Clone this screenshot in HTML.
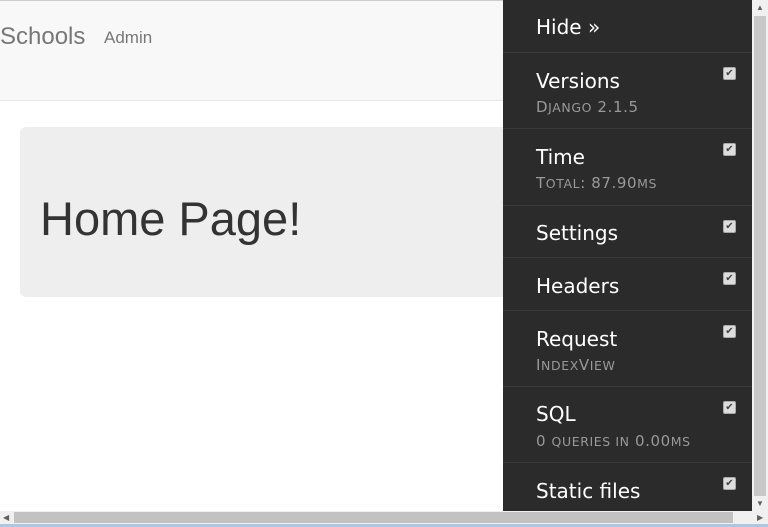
<!DOCTYPE html>
<html><head><style>
*{margin:0;padding:0;box-sizing:border-box}
body{width:768px;height:527px;overflow:hidden;background:#fff;font-family:"Liberation Sans",sans-serif;position:relative}
.top{position:absolute;left:0;top:0;width:768px;height:1px;background:#ccc}
.nav{position:absolute;left:0;top:1px;width:768px;height:100px;background:#f8f8f8;border-bottom:1px solid #e7e7e7}
.brand{position:absolute;left:0;top:22px;font-size:24px;color:#777}
.admin{position:absolute;left:104px;top:27px;font-size:17px;color:#777}
.jumbo{position:absolute;left:20px;top:127px;width:700px;height:170px;background:#eee;border-radius:6px}
.jumbo h1{position:absolute;left:20px;top:64px;font-size:47px;font-weight:400;color:#333}
.tb{position:absolute;left:503px;top:0;width:249px;height:511px;background:#2b2b2b;font-family:"DejaVu Sans",sans-serif}
.row{position:absolute;left:0;width:249px;border-bottom:1px solid #3a3a3a}
.row .t{position:absolute;left:33px;font-size:20px;color:#fff}
.row .s{position:absolute;left:33px;font-size:15px;color:#999;white-space:nowrap;letter-spacing:.6px}
.row .s small{font-size:12.5px}
.cb{position:absolute;left:220px;width:13px;height:13px;background:#ddd;border:1px solid #aaa;border-radius:2px;font-size:10px;line-height:11px;text-align:center;color:#444}
.vs{position:absolute;left:752px;top:0;width:16px;height:511px;background:#f0f0f0}
.vth{position:absolute;left:754px;top:16px;width:12px;height:480px;background:#c8c8c8}
.hs{position:absolute;left:0;top:511px;width:768px;height:13px;background:#f0f0f0}
.hth{position:absolute;left:14px;top:512px;width:719px;height:11px;background:#c2c2c2}
.bl{position:absolute;left:0;top:524px;width:768px;height:3px;background:#a8c8e8}
.ar{position:absolute;font-size:8px;color:#606060}
</style></head><body>
<div class="top"></div>
<div class="nav"><div class="brand">Schools</div><div class="admin">Admin</div></div>
<div class="jumbo"><h1>Home Page!</h1></div>
<div class="tb">
 <div class="row" style="top:0;height:53px"><div class="t" style="top:15px">Hide »</div></div>
 <div class="row" style="top:53px;height:76px"><div class="t" style="top:16px">Versions</div><div class="s" style="top:45px">D<small>JANGO</small> 2.1.5</div><div class="cb" style="top:14px">✔</div></div>
 <div class="row" style="top:129px;height:77px"><div class="t" style="top:16px">Time</div><div class="s" style="top:45px">T<small>OTAL</small>: 87.90<small>MS</small></div><div class="cb" style="top:14px">✔</div></div>
 <div class="row" style="top:206px;height:52px"><div class="t" style="top:15px">Settings</div><div class="cb" style="top:14px">✔</div></div>
 <div class="row" style="top:258px;height:53px"><div class="t" style="top:16px">Headers</div><div class="cb" style="top:14px">✔</div></div>
 <div class="row" style="top:311px;height:76px"><div class="t" style="top:16px">Request</div><div class="s" style="top:45px">I<small>NDEX</small>V<small>IEW</small></div><div class="cb" style="top:14px">✔</div></div>
 <div class="row" style="top:387px;height:76px"><div class="t" style="top:15px">SQL</div><div class="s" style="top:45px">0 <small>QUERIES IN</small> 0.00<small>MS</small></div><div class="cb" style="top:14px">✔</div></div>
 <div class="row" style="top:463px;height:60px;border:none"><div class="t" style="top:16px">Static files</div><div class="cb" style="top:14px">✔</div></div>
</div>
<div class="vs"></div><div class="vth"></div>
<div class="ar" style="left:756px;top:3px">▲</div><div class="ar" style="left:756px;top:499px">▼</div>
<div class="hs"></div><div class="hth"></div>
<div class="ar" style="left:3px;top:513px">◀</div><div class="ar" style="left:757px;top:513px">▶</div>
<div class="bl"></div>
</body></html>
